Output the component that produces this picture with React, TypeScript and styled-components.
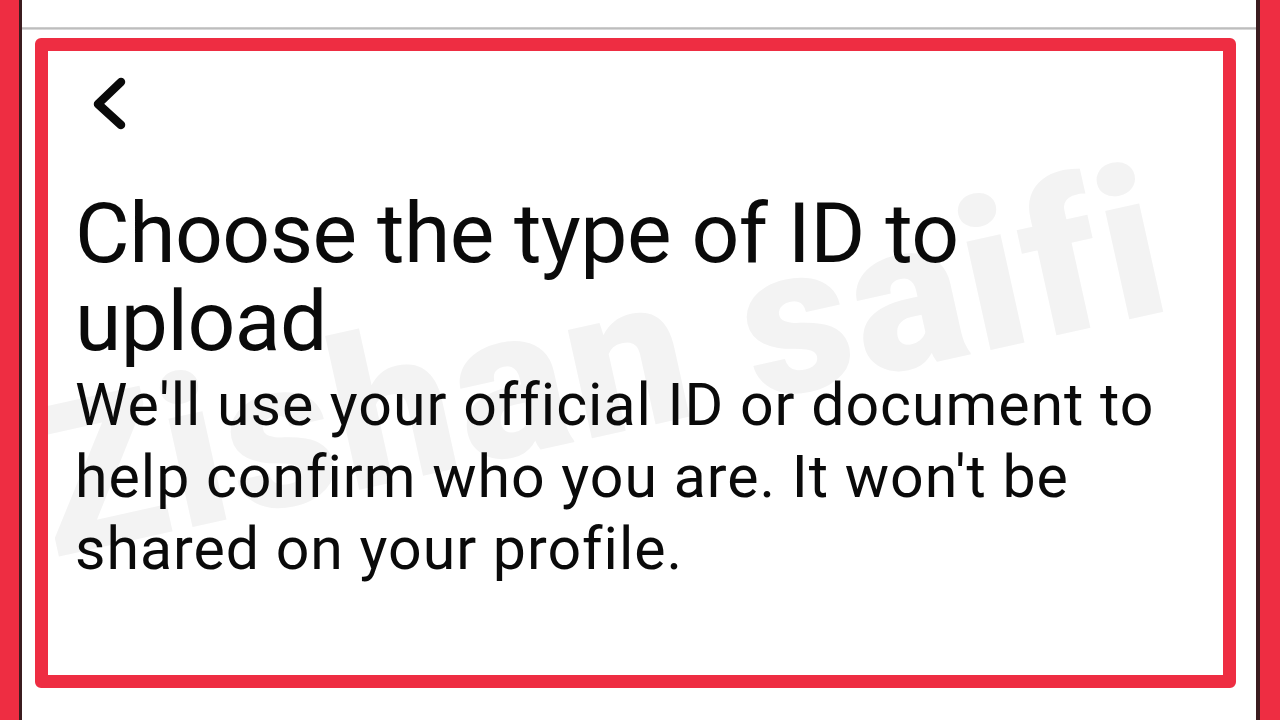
import React from "react";
import styled, { createGlobalStyle } from "styled-components";

const Global = createGlobalStyle`
  html, body { margin: 0; padding: 0; background: #ffffff; }
  body { font-family: Roboto, "Noto Sans", Arial, sans-serif; }
  * { box-sizing: border-box; }
`;

const RED = "#ee2d42";

const Frame = styled.div`
  display: flex;
  width: 1280px;
  height: 720px;
  overflow: hidden;
  background: #ffffff;
`;

const SideBar = styled.div<{ $side: "left" | "right" }>`
  flex: 0 0 ${(p) => (p.$side === "left" ? "22px" : "24px")};
  background: ${RED};
  ${(p) =>
    p.$side === "left"
      ? "border-right: 3px solid #3b1c1f;"
      : "border-left: 4px solid #3b1c1f;"}
`;

const Center = styled.div`
  flex: 1;
  display: flex;
  flex-direction: column;
  min-width: 0;
`;

const TopStrip = styled.div`
  height: 27px;
  background: #ffffff;
`;

const Divider = styled.div`
  height: 3px;
  background: linear-gradient(#d4d4d4, #bdbdbd 50%, #e6e6e6);
`;

const Card = styled.section`
  position: relative;
  margin: 8px 20px 0 13px;
  height: 650px;
  border: 13px solid ${RED};
  border-radius: 6px;
  background: #ffffff;
  overflow: hidden;
  padding: 23px 0 0 27px;
  display: flex;
  flex-direction: column;
`;

const Watermark = styled.div`
  position: absolute;
  left: 4px;
  top: 330px;
  font-family: Roboto, Arial, sans-serif;
  font-weight: 900;
  font-size: 210px;
  line-height: 210px;
  letter-spacing: 4px;
  color: #f3f3f3;
  white-space: nowrap;
  transform: rotate(-12.5deg);
  transform-origin: 0% 84%;
  pointer-events: none;
  user-select: none;
  z-index: 0;
`;

const BackButton = styled.button`
  position: relative;
  z-index: 1;
  align-self: flex-start;
  margin-left: 14px;
  width: 40px;
  height: 60px;
  padding: 0;
  border: 0;
  background: transparent;
  display: flex;
`;

const Title = styled.h1`
  position: relative;
  z-index: 1;
  margin: 56px 0 0 0;
  font-family: Roboto, Arial, sans-serif;
  font-weight: 400;
  font-size: 84px;
  line-height: 88px;
  letter-spacing: -0.5px;
  color: #0a0a0a;
  width: 960px;
`;

const Body = styled.p`
  position: relative;
  z-index: 1;
  margin: 3px 0 0 0;
  font-family: Roboto, Arial, sans-serif;
  font-weight: 400;
  font-size: 59px;
  line-height: 72px;
  letter-spacing: 1px;
  color: #0a0a0a;
  width: 1150px;
`;

export default function App() {
  return (
    <>
      <Global />
      <Frame>
        <SideBar $side="left" />
        <Center>
          <TopStrip />
          <Divider />
          <Card>
            <Watermark aria-hidden="true">Zishan saifi</Watermark>
            <BackButton aria-label="Back">
              <svg width="40" height="60" viewBox="0 0 40 60">
                <polyline
                  points="32,8 9,30 32,51"
                  fill="none"
                  stroke="#0a0a0a"
                  strokeWidth="8.5"
                  strokeLinecap="round"
                  strokeLinejoin="round"
                />
              </svg>
            </BackButton>
            <Title>
              Choose the type of ID to
              <br />
              upload
            </Title>
            <Body>
              We'll use your official ID or document to
              <br />
              help confirm who you are. It won't be
              <br />
              shared on your profile.
            </Body>
          </Card>
        </Center>
        <SideBar $side="right" />
      </Frame>
    </>
  );
}
